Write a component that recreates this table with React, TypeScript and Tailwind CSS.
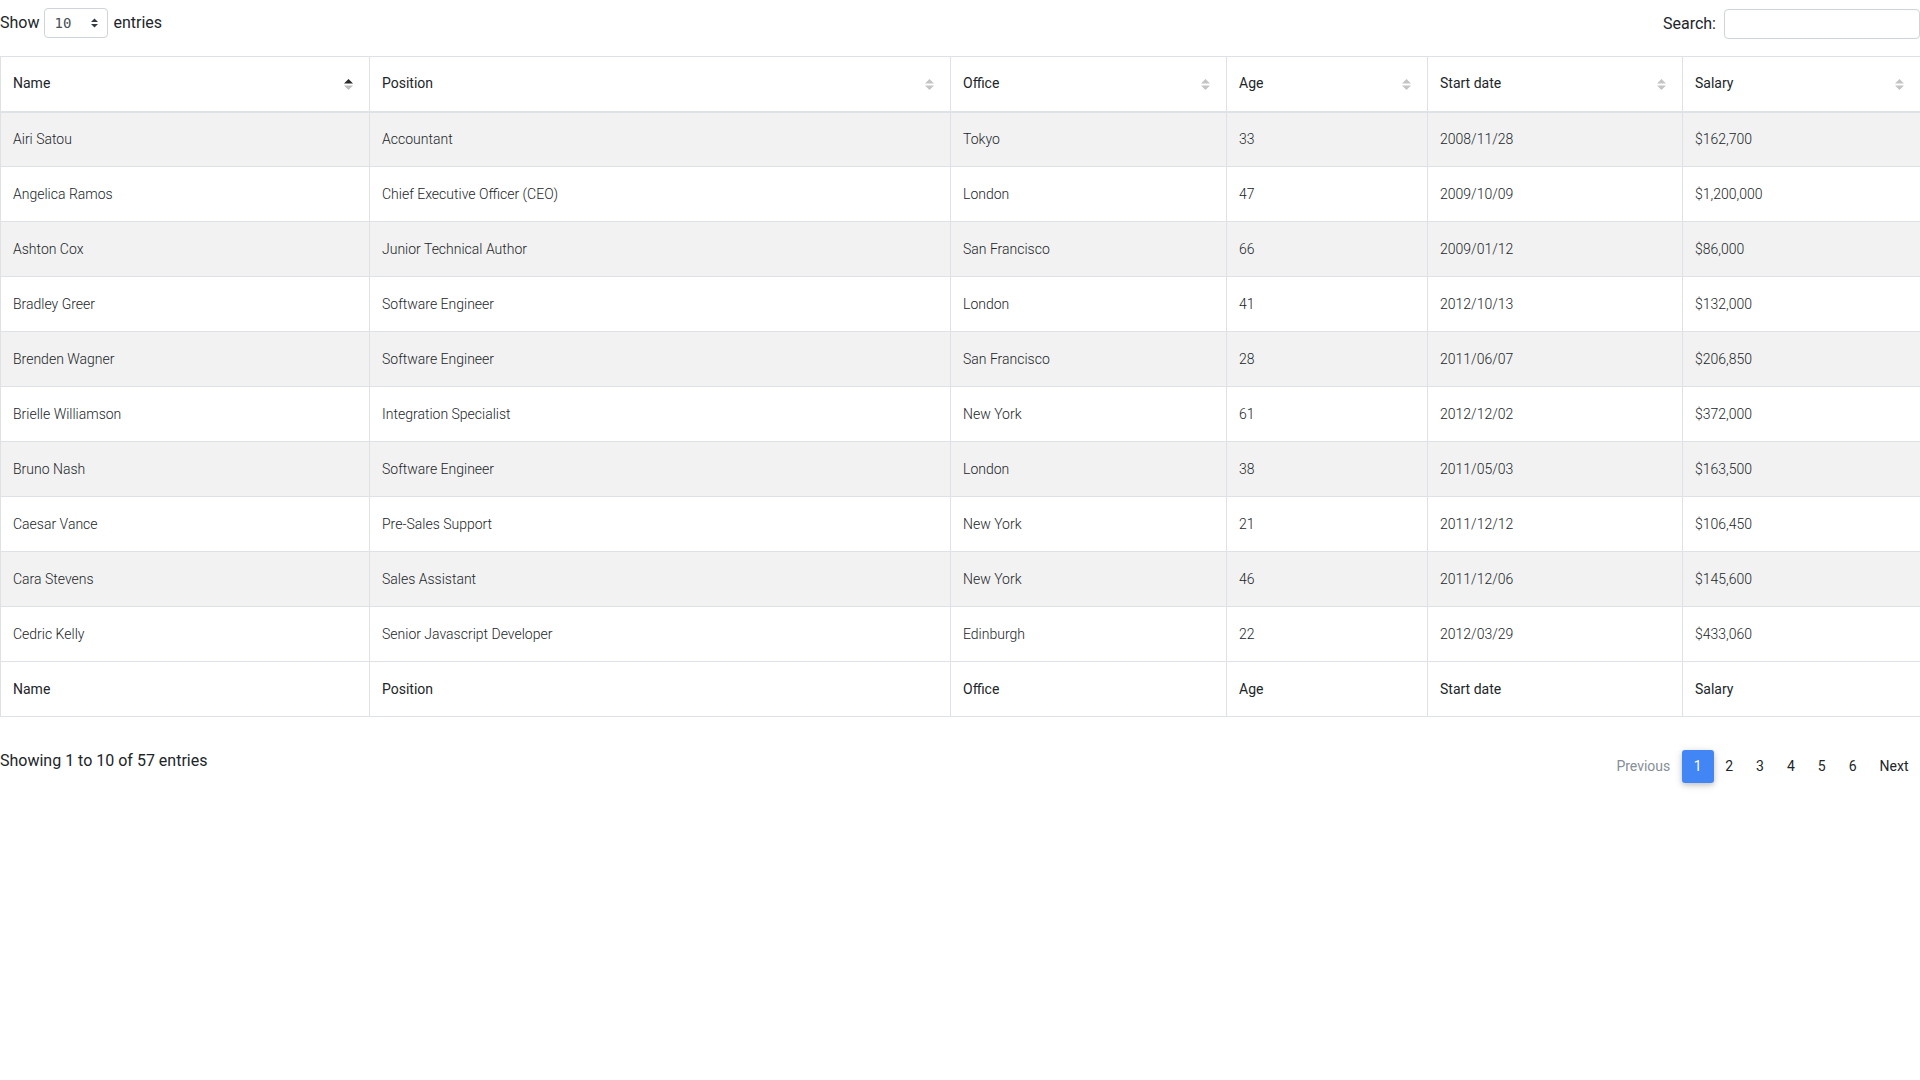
import React from "react";

const rows: string[][] = [
  ["Airi Satou", "Accountant", "Tokyo", "33", "2008/11/28", "$162,700"],
  ["Angelica Ramos", "Chief Executive Officer (CEO)", "London", "47", "2009/10/09", "$1,200,000"],
  ["Ashton Cox", "Junior Technical Author", "San Francisco", "66", "2009/01/12", "$86,000"],
  ["Bradley Greer", "Software Engineer", "London", "41", "2012/10/13", "$132,000"],
  ["Brenden Wagner", "Software Engineer", "San Francisco", "28", "2011/06/07", "$206,850"],
  ["Brielle Williamson", "Integration Specialist", "New York", "61", "2012/12/02", "$372,000"],
  ["Bruno Nash", "Software Engineer", "London", "38", "2011/05/03", "$163,500"],
  ["Caesar Vance", "Pre-Sales Support", "New York", "21", "2011/12/12", "$106,450"],
  ["Cara Stevens", "Sales Assistant", "New York", "46", "2011/12/06", "$145,600"],
  ["Cedric Kelly", "Senior Javascript Developer", "Edinburgh", "22", "2012/03/29", "$433,060"],
];

const headers = ["Name", "Position", "Office", "Age", "Start date", "Salary"];
const widths = [369, 581, 276, 201, 255, 238];

function SortIcon({ active }: { active?: boolean }) {
  return (
    <svg width="9" height="13" viewBox="0 0 9 13" className="shrink-0 mt-[2px]">
      <polygon points="0,5.5 4.5,1 9,5.5" fill={active ? "#2b2b2b" : "#c4c4c4"} />
      <polygon points="0,7.5 4.5,12 9,7.5" fill={active ? "#bdbdbd" : "#c4c4c4"} />
    </svg>
  );
}

export default function App() {
  return (
    <div
      className="w-[1920px] min-h-[1080px] bg-white text-[#212529]"
      style={{ fontFamily: "Roboto, 'Noto Sans', sans-serif" }}
    >
      <div className="flex justify-between items-start pt-2 h-[56px]">
        <div className="flex items-center text-base">
          <span>Show</span>
          <div className="ml-[5px] mr-[5px] w-[64px] h-[30px] border border-[#ced4da] rounded-[4px] flex items-center justify-between pl-[9px] pr-[9px]">
            <span className="text-[14px] text-[#495057]" style={{ fontFamily: "'DejaVu Sans Mono', monospace" }}>10</span>
            <svg width="7" height="10" viewBox="0 0 7 10">
              <polygon points="0,4 3.5,0.5 7,4" fill="#343a40" />
              <polygon points="0,6 3.5,9.5 7,6" fill="#343a40" />
            </svg>
          </div>
          <span>entries</span>
        </div>
        <div className="flex items-center text-base mt-px">
          <span className="mr-2">Search:</span>
          <div className="w-[196px] h-[30px] border border-[#ced4da] rounded-[4px]" />
        </div>
      </div>

      <table className="w-full border-collapse table-fixed text-[14px]">
        <colgroup>
          {widths.map((w, i) => (
            <col key={i} style={{ width: w }} />
          ))}
        </colgroup>
        <thead>
          <tr className="h-[55px]">
            {headers.map((h, i) => (
              <th key={h} className="border border-[#dee2e6] border-b-2 font-normal text-left px-3 py-0">
                <div className="flex items-center justify-between pr-[4px]">
                  <span>{h}</span>
                  <SortIcon active={i === 0} />
                </div>
              </th>
            ))}
          </tr>
        </thead>
        <tbody>
          {rows.map((r, ri) => (
            <tr key={ri} className={ri % 2 === 0 ? "h-[55px] bg-[#f2f2f2]" : "h-[55px] bg-white"}>
              {r.map((c, ci) => (
                <td key={ci} className="border border-[#dee2e6] px-3 py-0 font-light">
                  {c}
                </td>
              ))}
            </tr>
          ))}
        </tbody>
        <tfoot>
          <tr className="h-[55px]">
            {headers.map((h) => (
              <th key={h} className="border border-[#dee2e6] font-normal text-left px-3 py-0">
                {h}
              </th>
            ))}
          </tr>
        </tfoot>
      </table>

      <div className="flex justify-between items-start mt-8">
        <div className="text-base leading-6">Showing 1 to 10 of 57 entries</div>
        <div className="flex items-center mt-px text-[14px]">
          <span className="h-[33px] px-[11.5px] flex items-center text-[#868e96]">Previous</span>
          <span className="h-[33px] px-[12px] flex items-center bg-[#4285f4] text-white rounded-[3px] shadow-[0_2px_5px_0_rgba(0,0,0,0.16),0_2px_10px_0_rgba(0,0,0,0.12)]">1</span>
          {["2", "3", "4", "5", "6"].map((p) => (
            <span key={p} className="h-[33px] px-[11.5px] flex items-center">
              {p}
            </span>
          ))}
          <span className="h-[33px] px-[11.5px] flex items-center">Next</span>
        </div>
      </div>
    </div>
  );
}
